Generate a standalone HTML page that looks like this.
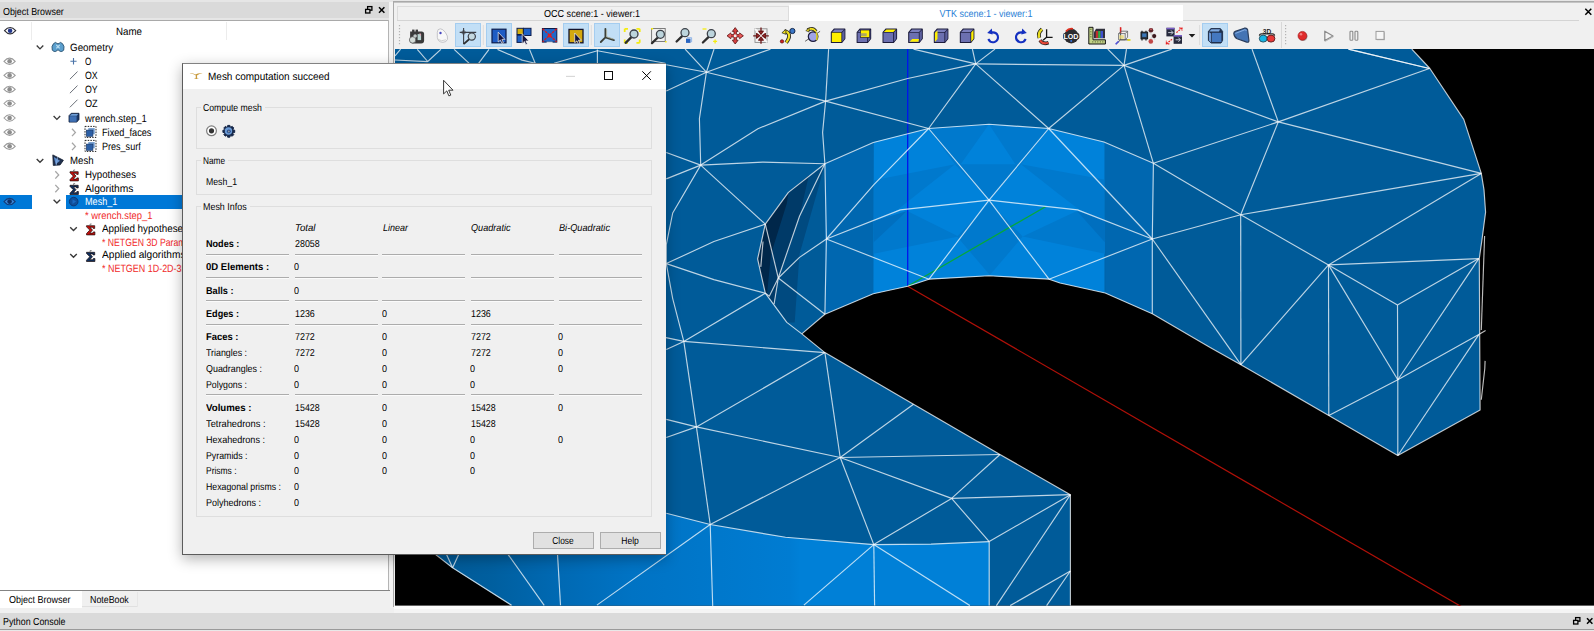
<!DOCTYPE html>
<html lang="en"><head><meta charset="utf-8"><title>Mesh computation succeed</title>
<style>
html,body{margin:0;padding:0;}
body{width:1594px;height:631px;overflow:hidden;background:#f0f0f0;position:relative;font-family:"Liberation Sans", sans-serif;}
.b{position:absolute;display:block;}
.t{position:absolute;white-space:nowrap;transform-origin:0 50%;color:#000;line-height:16px;text-rendering:geometricPrecision;}
#dlg{position:absolute;left:0;top:0;}
</style></head><body>
<div class="b" style="left:0px;top:0px;width:1594px;height:2px;background:#e6e6e6;"></div>
<div class="b" style="left:0px;top:2px;width:389px;height:16px;background:#dadada;"></div>
<div class="b" style="left:0px;top:18px;width:389px;height:2px;background:#e6e6e6;"></div>
<div class="b" style="left:393px;top:1px;width:1201px;height:1px;background:#a9a9a9;"></div>
<div class="b" style="left:393px;top:2px;width:1201px;height:1px;background:#c4c4c4;"></div>
<div class="b" style="left:0px;top:20px;width:389px;height:1px;background:#a9a9a9;"></div>
<span class="t" id="t1" style="left:2.6px;top:5px;font-size:10.2px;transform:scaleX(0.8731);">Object Browser</span>
<svg class="b" style="left:363px;top:5px" width="24" height="12" viewBox="363 5 24 12"><g fill="none" stroke="#000" stroke-width="1.3"><rect x="367.6" y="6.6" width="4.3" height="3.6"/><rect x="365.6" y="9.4" width="4.3" height="3.6" fill="#dadada"/><path d="M379 7.3l5.4 5.4M384.4 7.3l-5.4 5.4" stroke-width="1.5"/></g></svg>
<div class="b" style="left:0px;top:21px;width:389px;height:569px;background:#fff;"></div>
<div class="b" style="left:389px;top:2px;width:4px;height:606px;background:#f3f3f3;"></div>
<div class="b" style="left:388px;top:20px;width:1px;height:571px;background:#b4b4b4;"></div>
<div class="b" style="left:0px;top:590px;width:390px;height:1px;background:#838383;"></div>
<div class="b" style="left:31.3px;top:22px;width:1px;height:18px;background:#ececec;"></div>
<div class="b" style="left:225.5px;top:22px;width:1px;height:18px;background:#ececec;"></div>
<span class="t" id="t2" style="left:116px;top:24px;font-size:10.6px;transform:scaleX(0.9198);">Name</span>
<div class="b" style="left:0px;top:194.8px;width:32.2px;height:14px;background:#0078d7;"></div>
<div class="b" style="left:65.5px;top:194.8px;width:130px;height:14px;background:#0078d7;"></div>
<span class="t" id="t3" style="left:69.7px;top:40px;font-size:10.6px;transform:scaleX(0.9266);">Geometry</span>
<span class="t" id="t4" style="left:85.2px;top:54px;font-size:10.6px;transform:scaleX(0.7636);">O</span>
<span class="t" id="t5" style="left:85.2px;top:68px;font-size:10.6px;transform:scaleX(0.8294);">OX</span>
<span class="t" id="t6" style="left:85.2px;top:82px;font-size:10.6px;transform:scaleX(0.8294);">OY</span>
<span class="t" id="t7" style="left:85.2px;top:96px;font-size:10.6px;transform:scaleX(0.8628);">OZ</span>
<span class="t" id="t8" style="left:85.2px;top:111px;font-size:10.6px;transform:scaleX(0.8969);">wrench.step_1</span>
<span class="t" id="t9" style="left:101.8px;top:125px;font-size:10.6px;transform:scaleX(0.8648);">Fixed_faces</span>
<span class="t" id="t10" style="left:101.8px;top:139px;font-size:10.6px;transform:scaleX(0.8535);">Pres_surf</span>
<span class="t" id="t11" style="left:70px;top:153px;font-size:10.6px;transform:scaleX(0.9110);">Mesh</span>
<span class="t" id="t12" style="left:85.2px;top:167px;font-size:10.6px;transform:scaleX(0.9115);">Hypotheses</span>
<span class="t" id="t13" style="left:85.2px;top:181px;font-size:10.6px;transform:scaleX(0.9691);">Algorithms</span>
<span class="t" id="t14" style="left:85.2px;top:194px;font-size:10.6px;color:#fff;transform:scaleX(0.8593);">Mesh_1</span>
<span class="t" id="t15" style="left:85.2px;top:208px;font-size:10.6px;color:#f02a2a;transform:scaleX(0.8885);">* wrench.step_1</span>
<span class="t" id="t16" style="left:101.8px;top:221px;font-size:10.6px;transform:scaleX(0.9300);">Applied hypotheses</span>
<span class="t" id="t17" style="left:101.8px;top:235px;font-size:10.6px;color:#f02a2a;transform:scaleX(0.8200);">* NETGEN 3D Parameters_1</span>
<span class="t" id="t18" style="left:101.8px;top:247px;font-size:10.6px;transform:scaleX(0.9580);">Applied algorithms</span>
<span class="t" id="t19" style="left:101.8px;top:261px;font-size:10.6px;color:#f02a2a;transform:scaleX(0.8444);">* NETGEN 1D-2D-3D</span>
<svg class="b" style="left:0;top:20px" width="182" height="260" viewBox="0 20 182 260"><path d="M4.5 30.7q5.6-6.400 11.200 0q-5.600 6.400-11.200 0z" fill="#fff" stroke="#2c2c34" stroke-width="1.1"/><circle cx="10.1" cy="30.7" r="2.3" fill="#24388c"/><path d="M4.0 61.3q5.6-6.400 11.200 0q-5.600 6.400-11.200 0z" fill="#fff" stroke="#9b9b9b" stroke-width="1.1"/><circle cx="9.6" cy="61.3" r="2.3" fill="#8c8c8c"/><path d="M4.0 75.4q5.6-6.400 11.200 0q-5.600 6.400-11.200 0z" fill="#fff" stroke="#9b9b9b" stroke-width="1.1"/><circle cx="9.6" cy="75.4" r="2.3" fill="#8c8c8c"/><path d="M4.0 89.4q5.6-6.400 11.200 0q-5.600 6.400-11.200 0z" fill="#fff" stroke="#9b9b9b" stroke-width="1.1"/><circle cx="9.6" cy="89.4" r="2.3" fill="#8c8c8c"/><path d="M4.0 103.5q5.6-6.400 11.200 0q-5.600 6.400-11.200 0z" fill="#fff" stroke="#9b9b9b" stroke-width="1.1"/><circle cx="9.6" cy="103.5" r="2.3" fill="#8c8c8c"/><path d="M4.0 118.0q5.6-6.400 11.200 0q-5.600 6.400-11.200 0z" fill="#fff" stroke="#9b9b9b" stroke-width="1.1"/><circle cx="9.6" cy="118.0" r="2.3" fill="#8c8c8c"/><path d="M4.0 132.2q5.6-6.400 11.200 0q-5.600 6.400-11.200 0z" fill="#fff" stroke="#9b9b9b" stroke-width="1.1"/><circle cx="9.6" cy="132.2" r="2.3" fill="#8c8c8c"/><path d="M4.0 146.3q5.6-6.400 11.200 0q-5.600 6.400-11.200 0z" fill="#fff" stroke="#9b9b9b" stroke-width="1.1"/><circle cx="9.6" cy="146.3" r="2.3" fill="#8c8c8c"/><path d="M4.0 201.6q5.6-6.400 11.200 0q-5.600 6.400-11.200 0z" fill="#3b86d6" stroke="#143c78" stroke-width="1.1"/><circle cx="9.6" cy="201.6" r="2.3" fill="#0d2f66"/><path d="M36.7 45.6l3.300 3.300 3.300-3.300" fill="none" stroke="#3a3a3a" stroke-width="1.35"/><path d="M53.6 116.1l3.300 3.300 3.300-3.300" fill="none" stroke="#3a3a3a" stroke-width="1.35"/><path d="M36.7 158.9l3.300 3.300 3.300-3.300" fill="none" stroke="#3a3a3a" stroke-width="1.35"/><path d="M53.6 199.7l3.300 3.300 3.300-3.300" fill="none" stroke="#3a3a3a" stroke-width="1.35"/><path d="M70.2 227.3l3.300 3.300 3.300-3.300" fill="none" stroke="#3a3a3a" stroke-width="1.35"/><path d="M70.2 253.9l3.300 3.300 3.300-3.300" fill="none" stroke="#3a3a3a" stroke-width="1.35"/><path d="M72.0 128.7l3.400 3.700-3.400 3.700" fill="none" stroke="#a6a6a6" stroke-width="1.3"/><path d="M72.0 142.7l3.400 3.700-3.400 3.700" fill="none" stroke="#a6a6a6" stroke-width="1.3"/><path d="M55.3 171.2l3.400 3.700-3.400 3.700" fill="none" stroke="#a6a6a6" stroke-width="1.3"/><path d="M55.3 184.9l3.400 3.700-3.400 3.700" fill="none" stroke="#a6a6a6" stroke-width="1.3"/><path d="M52.0 46.6q1.200-3.800 3.600-4.200 1.500 1.400 2.400 1.400t2.400-1.400q2.400.4 3.600 4.200l-.3 3.600q-1.800 1.900-3.500 1.200l-2.200-1.600-2.200 1.600q-1.700.7-3.500-1.200z" fill="#5b9fce" stroke="#27506e" stroke-width=".9"/><path d="M56.3 45.0l3.400 3.400m0-3.400l-3.400 3.400" stroke="#b8dcf0" stroke-width="1.2"/><path d="M70.4 61.3h6.200M73.5 58.1v6.400" stroke="#4b74a8" stroke-width="1.1" fill="none"/><path d="M69.9 79.2l7.600-7.600" stroke="#6a6f78" stroke-width="1" fill="none"/><path d="M69.9 93.2l7.600-7.600" stroke="#6a6f78" stroke-width="1" fill="none"/><path d="M69.9 107.3l7.600-7.600" stroke="#6a6f78" stroke-width="1" fill="none"/><path d="M69.0 115.7l2.200-2.400h7.800v6.200l-2.200 2.600h-7.800z" fill="#1b3866" stroke="#10203c" stroke-width=".8" stroke-linejoin="round"/><rect x="69.6" y="116.2" width="7" height="5.600" fill="#3f70b4"/><path d="M69.9 115.8l1.700-1.800h6.600l-1.500 1.800z" fill="#6f9fd8"/><rect x="85.0" y="126.4" width="11" height="11" fill="#fff" stroke="#222" stroke-width="1" stroke-dasharray="1.5 1.2"/><rect x="88.3" y="128.1" width="6.400" height="6.200" fill="#6f9bd0"/><rect x="86.3" y="130.1" width="6.600" height="6.200" fill="#2c5fa6" stroke="#1a3560" stroke-width=".6"/><rect x="85.0" y="140.4" width="11" height="11" fill="#fff" stroke="#222" stroke-width="1" stroke-dasharray="1.5 1.2"/><rect x="88.3" y="142.1" width="6.400" height="6.200" fill="#6f9bd0"/><rect x="86.3" y="144.1" width="6.600" height="6.200" fill="#2c5fa6" stroke="#1a3560" stroke-width=".6"/><path d="M52.8 154.9l10.600 5.400-3.300 4.600-6.800.5z" fill="#20304e" stroke="#101a2c" stroke-width=".8" stroke-linejoin="round"/><path d="M53.8 157.1l6.200 3.600-4.400 3.600z" fill="#5f8fd0"/><path d="M57.5 157.3l-1.400 8.200" stroke="#8fb4e4" stroke-width=".8"/><g transform="translate(74.1 175.3)"><path d="M-4.100-3.600h8.200v2.700h-1.500l-.4-1.100h-2.800l2.500 2.800-2.700 3h3.100l.5-1.200h1.500v3h-8.400v-1.300l3.300-3.500-3.300-3.300z" fill="#c4100c" stroke="#1a0c0c" stroke-width=".7" stroke-linejoin="round"/><path d="M-.5-3.600v-1.700h1.500" stroke="#666" stroke-width=".8" fill="none"/></g><g transform="translate(74.1 188.9)"><path d="M-4.100-3.600h8.200v2.700h-1.500l-.4-1.100h-2.800l2.500 2.800-2.700 3h3.100l.5-1.200h1.500v3h-8.400v-1.300l3.300-3.500-3.300-3.300z" fill="#10305e" stroke="#1a0c0c" stroke-width=".7" stroke-linejoin="round"/><path d="M-.5-3.600v-1.700h1.500" stroke="#666" stroke-width=".8" fill="none"/></g><circle cx="73.7" cy="201.6" r="4.300" fill="#0f4f9a" stroke="#0a3a7a" stroke-width="1"/><path d="M72.5 199.3l3.600 2.200-3.600 2.400z" fill="#1a6ac2"/><g transform="translate(90.6 229.3)"><path d="M-4.100-3.600h8.200v2.700h-1.500l-.4-1.100h-2.800l2.500 2.800-2.700 3h3.100l.5-1.200h1.500v3h-8.400v-1.300l3.300-3.500-3.300-3.300z" fill="#c4100c" stroke="#1a0c0c" stroke-width=".7" stroke-linejoin="round"/><path d="M-.5-3.600v-1.700h1.500" stroke="#666" stroke-width=".8" fill="none"/></g><g transform="translate(90.6 255.9)"><path d="M-4.100-3.600h8.200v2.700h-1.500l-.4-1.100h-2.800l2.500 2.800-2.700 3h3.100l.5-1.200h1.500v3h-8.400v-1.300l3.300-3.500-3.300-3.300z" fill="#10305e" stroke="#1a0c0c" stroke-width=".7" stroke-linejoin="round"/><path d="M-.5-3.600v-1.700h1.500" stroke="#666" stroke-width=".8" fill="none"/></g></svg>
<div class="b" style="left:0px;top:591px;width:390px;height:17px;background:#f0f0f0;"></div>
<div class="b" style="left:0px;top:591px;width:81.7px;height:17px;background:#fff;"></div>
<div class="b" style="left:82px;top:606px;width:55px;height:1px;background:#e0e0e0;"></div>
<div class="b" style="left:136.5px;top:592px;width:1px;height:15px;background:#e6e6e6;"></div>
<span class="t" id="t20" style="left:8.6px;top:593px;font-size:10.2px;transform:scaleX(0.8831);">Object Browser</span>
<span class="t" id="t21" style="left:89.8px;top:593px;font-size:10.2px;transform:scaleX(0.8670);">NoteBook</span>
<div class="b" style="left:0px;top:608px;width:1594px;height:5px;background:#f0f0f0;"></div>
<div class="b" style="left:0px;top:612.8px;width:1594px;height:16px;background:#dadada;"></div>
<div class="b" style="left:0px;top:628.6px;width:1594px;height:1.4px;background:#9a9a9a;"></div>
<div class="b" style="left:0px;top:630px;width:1594px;height:1px;background:#e8e8e8;"></div>
<span class="t" id="t22" style="left:2.6px;top:615px;font-size:10.2px;transform:scaleX(0.8688);">Python Console</span>
<svg class="b" style="left:1568.700px;top:615.6px" width="26" height="12" viewBox="1568 615 26 12"><g fill="none" stroke="#000" stroke-width="1.3"><rect x="1574.6" y="616.6" width="4.3" height="3.6"/><rect x="1572.6" y="619.4" width="4.3" height="3.6" fill="#dadada"/><path d="M1586 617.3l5.4 5.4M1591.4 617.3l-5.4 5.4" stroke-width="1.5"/></g></svg>
<div class="b" style="left:393px;top:2px;width:1px;height:605px;background:#a9a9a9;"></div>
<div class="b" style="left:397px;top:6px;width:391.5px;height:14.5px;background:#f0f0f0;border:1px solid #dcdcdc;box-sizing:border-box;"></div>
<div class="b" style="left:397px;top:20.3px;width:1182px;height:1px;background:#d4d4d4;"></div>
<div class="b" style="left:788.5px;top:4.5px;width:394.5px;height:16.5px;background:#fff;"></div>
<span class="t" id="t23" style="left:591.5px;top:7px;font-size:10.2px;transform:translateX(-50%) scaleX(0.8877);transform-origin:50% 50%;">OCC scene:1 - viewer:1</span>
<span class="t" id="t24" style="left:986.3px;top:7px;font-size:10.2px;color:#2b7fd6;transform:translateX(-50%) scaleX(0.8831);transform-origin:50% 50%;">VTK scene:1 - viewer:1</span>
<svg class="b" style="left:1580px;top:6px" width="14" height="12" viewBox="1580 6 14 12"><path d="M1585.3 8.7l6 6M1591.3 8.7l-6 6" stroke="#000" stroke-width="1.5" fill="none"/></svg>
<svg class="b" style="left:394px;top:21px" width="1200" height="28" viewBox="394 21 1200 28">
<rect x="455.5" y="23.500" width="25" height="23" fill="#c2dff6" stroke="#a4cdf0" stroke-width="1"/>
<rect x="486.5" y="23.500" width="25" height="23" fill="#c2dff6" stroke="#a4cdf0" stroke-width="1"/>
<rect x="563.5" y="23.500" width="25" height="23" fill="#c2dff6" stroke="#a4cdf0" stroke-width="1"/>
<rect x="594.5" y="23.500" width="25" height="23" fill="#c2dff6" stroke="#a4cdf0" stroke-width="1"/>
<rect x="1202.5" y="23.500" width="25" height="23" fill="#c2dff6" stroke="#a4cdf0" stroke-width="1"/>
<path d="M483.3 25v20" stroke="#dcdcdc" stroke-width="1"/>
<path d="M591.3 25v20" stroke="#dcdcdc" stroke-width="1"/>
<path d="M1199.6 25v20" stroke="#dcdcdc" stroke-width="1"/>
<path d="M399.5 25v21" stroke="#b4b4b4" stroke-width="1.200" stroke-dasharray="1.200 1.800"/>
<path d="M1285.6 25v21" stroke="#b4b4b4" stroke-width="1.200" stroke-dasharray="1.200 1.800"/>
<path d="M1281.500 22v26" stroke="#d8d8d8" stroke-width="1"/>
<g transform="translate(416.6 35.8)"><g transform="translate(0 .8)"><path d="M-6.500-5h11.500q2.500 0 2.500 2.500v6.500q0 3-3 3h-8q-3 0-3-3z" fill="#3a3a3a"/><rect x="-4.500" y="-7" width="2.400" height="2.400" fill="#3a3a3a"/><rect x="-1" y="-7" width="2.400" height="2.400" fill="#3a3a3a"/><path d="M1-2.500h3.500v6h-3.500z" fill="#b8d4d0"/><path d="M2.500-3l1.800 0 0 3z" fill="#e0a0b0"/><circle cx="-4" cy="3.300" r="3.200" fill="#d4dcd8" stroke="#555" stroke-width=".8"/><circle cx="-1.500" cy="-.6" r="1.800" fill="#c0c8c8"/></g></g>
<g transform="translate(441.8 35.8)"><path d="M-4.500-3.500q0-3.500 3-3.500 2.500 0 5 3.500 3 4 2.200 7-1 3-4.500 3-5 0-5.700-5z" fill="#f8f8f8" stroke="#c4c4c8" stroke-width="1"/><circle cx="-1.300" cy="-2.800" r="1.200" fill="#4848c0"/><path d="M-3.800 3.500q3 2.500 8 .5" stroke="#d0d0d0" stroke-width="1" fill="none"/></g>
<g transform="translate(468.2 35.8)"><path d="M-8.500-3.400h16.500M-4.600-7.800v16" stroke="#3c4048" stroke-width="1.100"/><path d="M-6-4.800h2.800v2.800h-2.800z" fill="none" stroke="#3c4048" stroke-width=".7"/><path d="M1.500 3l-5.500 4.800" stroke="#2e2e2e" stroke-width="1.800" stroke-linecap="round"/><circle cx="3.600" cy=".8" r="3.600" fill="#c4d8e0" stroke="#3c4048" stroke-width="1.200"/></g>
<g transform="translate(499.0 35.8)"><rect x="-7" y="-6.600" width="14" height="13.600" fill="#1e5cc4" stroke="#0c1c4c" stroke-width="1.200"/><path d="M-.8-3.600v9.800l2.200-2 1.500 3.300 1.500-.7-1.500-3.200h3z" fill="#14143c" stroke="#f4f4f4" stroke-width=".7" stroke-linejoin="round"/></g>
<g transform="translate(524.0 35.8)"><rect x="-.5" y="-7.500" width="7.500" height="7.200" fill="#1e62c8" stroke="#0c1c4c" stroke-width="1"/><rect x="-7" y="-7.500" width="6.300" height="6.200" fill="#d4b010" stroke="#0c1c4c" stroke-width="1"/><rect x="-7" y="-.6" width="6.500" height="7.200" fill="#1e62c8" stroke="#0c1c4c" stroke-width="1"/><g transform="translate(-1 1.500)"><path d="M-.8-3.600v9.800l2.200-2 1.500 3.300 1.500-.7-1.500-3.200h3z" fill="#14143c" stroke="#f4f4f4" stroke-width=".7" stroke-linejoin="round"/></g></g>
<g transform="translate(549.6 35.8)"><rect x="-7.200" y="-7.300" width="14.400" height="13.600" fill="#2068c8" stroke="#0c1c4c" stroke-width="1"/><path d="M-7-7l14 13M7-7l-14 13" stroke="#e01818" stroke-width="1.300" stroke-dasharray="2.500 1"/><circle r="1.800" fill="#e02020"/><path d="M-3 6.500h6" stroke="#e8e8e8" stroke-width="1.200"/></g>
<g transform="translate(576.0 35.8)"><rect x="-7" y="-6.400" width="14" height="13.400" fill="#d4a910" stroke="#14142c" stroke-width="1.300"/><g transform="translate(-.5 .8)"><path d="M-.8-3.600v9.800l2.200-2 1.500 3.300 1.500-.7-1.500-3.200h3z" fill="#14143c" stroke="#f4f4f4" stroke-width=".7" stroke-linejoin="round"/></g></g>
<g transform="translate(607.0 35.8)"><path d="M-1.600-7v8.600l-4.600 4.600M-1.600 1.600l8.500 2.800" stroke="#3c4038" stroke-width="1.800" fill="none" stroke-linecap="round"/><path d="M-.4-6v7l7 2.300" stroke="#a8ac98" stroke-width=".9" fill="none"/></g>
<g transform="translate(632.2 35.8)"><path d="M-7.500-7h3.300M-7.500-7v3.300M7.500-7h-3.300M7.500-7v3.300M-7.500 7h3.300M-7.500 7v-3.300M7.500 7h-3.300M7.500 7v-3.300" stroke="#f4ec10" stroke-width="1.800" fill="none"/><path d="M-0.8 1.4l-5.800 5.600" stroke="#2e2e2e" stroke-width="2.300" stroke-linecap="round"/><circle cx="1.8" cy="-1.8" r="4" fill="#bcd4dc" stroke="#3c4048" stroke-width="1.3"/></g>
<g transform="translate(658.6 35.8)"><rect x="-7" y="-7.300" width="13.600" height="13" fill="none" stroke="#707070" stroke-width=".9"/><path d="M-7.500-7h2M6.500 6h1.500" stroke="#f4ec10" stroke-width="1.500"/><path d="M-0.8 1.7l-5.800 5.600" stroke="#2e2e2e" stroke-width="2.300" stroke-linecap="round"/><circle cx="1.8" cy="-1.5" r="4" fill="#bcd4dc" stroke="#3c4048" stroke-width="1.3"/></g>
<g transform="translate(684.2 35.8)"><path d="M-1.8 0.1l-5.800 5.600" stroke="#2e2e2e" stroke-width="2.300" stroke-linecap="round"/><circle cx="0.8" cy="-3.1" r="4" fill="#bcd4dc" stroke="#3c4048" stroke-width="1.3"/><rect x="1.800" y="2.800" width="4.500" height="4.300" fill="#2864c0"/><path d="M2.800 1.900h4.600v4.500" stroke="#88b0e8" stroke-width=".9" fill="none"/></g>
<g transform="translate(709.8 35.8)"><path d="M-7.300-6.800h4" stroke="#f4ec10" stroke-width="1.300"/><path d="M3.300 5.600h4M5.300 3.600v4" stroke="#f4ec10" stroke-width="1.300"/><path d="M-1.1 1.1l-5.800 5.600" stroke="#2e2e2e" stroke-width="2.300" stroke-linecap="round"/><circle cx="1.5" cy="-2.1" r="4" fill="#bcd4dc" stroke="#3c4048" stroke-width="1.3"/></g>
<g transform="translate(735.2 35.8)"><path d="M0-8.200l2.900 3.800h-1.700v3.200h3.200v-1.700l3.800 2.900-3.800 2.900v-1.700h-3.200v3.200h1.700l-2.900 3.800-2.900-3.800h1.700v-3.200h-3.200v1.700l-3.800-2.900 3.800-2.900v1.700h3.200v-3.200h-1.700z" fill="#d84040" stroke="#5c1414" stroke-width=".8" stroke-linejoin="round"/><rect x="-1.300" y="-1.300" width="2.600" height="2.600" fill="#f0f0f0"/><path d="M-4.200-2.200l-2.800 2.200 2.800 2.200zM4.200-2.200l2.800 2.200-2.800 2.200z" fill="#e86060"/></g>
<g transform="translate(761.0 35.8)"><rect x="-6" y="-7" width="12" height="13.600" fill="#f4f4f4" stroke="#8c8c8c" stroke-width=".9"/><path d="M-6-7l12 13.600" stroke="#f8f8f8" stroke-width="1.800"/><path d="M0-8.200v3.800l-2.200-.2 2.200 3 2.200-3-2.200.2M0 8v-3.800l-2.200.2 2.200-3 2.200 3-2.200-.2M-7.800 0h3.600l-.2-2.200 3 2.200-3 2.200.2-2.200M7.800 0h-3.600l.2-2.200-3 2.200 3 2.200-.2-2.200" fill="#d43c3c" stroke="#6c1818" stroke-width="1.300" stroke-linejoin="round"/></g>
<g transform="translate(787.4 35.8)"><path d="M-3-4.500q4 .2 4.600 3.500t-2.800 7.800" stroke="#1c1c1c" stroke-width="3.800" fill="none"/><path d="M-3-4.500q4 .2 4.600 3.500t-2.800 7.800" stroke="#f0e020" stroke-width="2.200" fill="none"/><path d="M-5.500-3l4-3.500v5z" fill="#f0e020" stroke="#1c1c1c" stroke-width=".7"/><circle cx="5" cy="-4.800" r="2.600" fill="#3c78c8" stroke="#14284c" stroke-width="1"/><circle cx="-5.400" cy="5.600" r="1.700" fill="#d02020" stroke="#501010" stroke-width=".7"/></g>
<g transform="translate(812.6 35.8)"><path d="M-7.500 5.500l15-10" stroke="#505050" stroke-width=".9"/><circle cx=".5" cy=".8" r="4.800" fill="#a0a4e8" stroke="#1c1c3c" stroke-width="1.200"/><path d="M-5-5.800q5-3 8.500 1.500" stroke="#1c1c1c" stroke-width="3.400" fill="none"/><path d="M-5-5.800q5-3 8.500 1.500" stroke="#f0e020" stroke-width="1.900" fill="none"/><path d="M-6.800-5.200l3.500-2.600-.3 4z" fill="#f0e020" stroke="#1c1c1c" stroke-width=".6"/><path d="M3.500-3.500q1.800 3.500.5 8" stroke="#d8cc20" stroke-width="1.500" fill="none"/></g>
<g transform="translate(838.6 35.8)"><path d="M-7.200-3.400l3-3.400h10.400v9.600l-3 3.800h-10.400z" fill="#1c1c3c" stroke="#1c1c3c" stroke-width="1.2" stroke-linejoin="round"/><rect x="-6.800" y="-3.100" width="9.600" height="9.300" fill="#fff000"/><path d="M-6.400-3.900l2.500-2.500h9.400l-2.500 2.500z" fill="#7a7ebc"/><path d="M3.600-3.400l2.300-2.500v8.800l-2.300 3z" fill="#5c609e"/></g>
<g transform="translate(864.4 35.8)"><path d="M-7.200-3.400l3-3.400h10.400v9.600l-3 3.800h-10.400z" fill="#1c1c3c" stroke="#1c1c3c" stroke-width="1.2" stroke-linejoin="round"/><rect x="-6.800" y="-3.100" width="9.600" height="9.300" fill="#6c70b0"/><path d="M-6.400-3.900l2.500-2.500h9.400l-2.500 2.500z" fill="#7a7ebc"/><path d="M3.600-3.400l2.300-2.500v8.800l-2.300 3z" fill="#5c609e"/><rect x="-4" y="-5.800" width="9.300" height="7.600" fill="#fff000" stroke="#1c1c3c" stroke-width=".7"/><rect x="-6.500" y="-2.600" width="8.800" height="3" fill="#6c70b0" opacity=".55"/></g>
<g transform="translate(890.3 35.8)"><path d="M-7.200-3.400l3-3.400h10.400v9.600l-3 3.800h-10.400z" fill="#1c1c3c" stroke="#1c1c3c" stroke-width="1.2" stroke-linejoin="round"/><rect x="-6.800" y="-3.100" width="9.600" height="9.300" fill="#6c70b0"/><path d="M-6.400-3.900l2.500-2.500h9.400l-2.500 2.500z" fill="#fff000"/><path d="M3.600-3.400l2.300-2.500v8.800l-2.300 3z" fill="#5c609e"/></g>
<g transform="translate(916.0 35.8)"><path d="M-7.200-3.400l3-3.400h10.400v9.600l-3 3.800h-10.400z" fill="#1c1c3c" stroke="#1c1c3c" stroke-width="1.2" stroke-linejoin="round"/><rect x="-6.800" y="-3.100" width="9.600" height="9.300" fill="#6c70b0"/><path d="M-6.400-3.900l2.500-2.500h9.400l-2.500 2.500z" fill="#7a7ebc"/><path d="M3.600-3.400l2.300-2.500v8.800l-2.300 3z" fill="#5c609e"/><path d="M-6.400 6l2.600-2.800h6.800l-.6 2.800z" fill="#fff000"/></g>
<g transform="translate(941.6 35.8)"><path d="M-7.200-3.400l3-3.400h10.400v9.600l-3 3.800h-10.400z" fill="#1c1c3c" stroke="#1c1c3c" stroke-width="1.2" stroke-linejoin="round"/><rect x="-6.800" y="-3.100" width="9.600" height="9.300" fill="#6c70b0"/><path d="M-6.400-3.900l2.500-2.500h9.400l-2.500 2.500z" fill="#7a7ebc"/><path d="M3.600-3.400l2.300-2.500v8.800l-2.300 3z" fill="#5c609e"/><path d="M-6.700-3v9l2.600-2.800v-8.600z" fill="#fff000"/></g>
<g transform="translate(967.6 35.8)"><path d="M-7.200-3.400l3-3.400h10.400v9.600l-3 3.800h-10.400z" fill="#1c1c3c" stroke="#1c1c3c" stroke-width="1.2" stroke-linejoin="round"/><rect x="-6.800" y="-3.100" width="9.600" height="9.300" fill="#6c70b0"/><path d="M-6.400-3.900l2.500-2.500h9.400l-2.500 2.500z" fill="#7a7ebc"/><path d="M3.600-3.400l2.300-2.500v8.800l-2.300 3z" fill="#fff000"/></g>
<g transform="translate(994.0 35.8)"><path d="M-3.200-3.200q5.500-1 7 3.200 1 4.600-3.200 6.200-4.200 1.200-6.300-3" stroke="#1430c0" stroke-width="2.100" fill="none"/><path d="M-6.800-2.800l4.600-4.400.8 6z" fill="#1430c0"/></g>
<g transform="translate(1020.0 35.8)"><path d="M3.200-3.200q-5.500-1-7 3.200-1 4.600 3.200 6.200 4.200 1.200 6.300-3" stroke="#1430c0" stroke-width="2.100" fill="none"/><path d="M6.800-2.800l-4.600-4.400-.8 6z" fill="#1430c0"/></g>
<g transform="translate(1045.0 35.8)"><path d="M1.600-6.500v8h6M1.600 1.500l-3.600 3" stroke="#141414" stroke-width="1.300" fill="none"/><path d="M-3-6.500q-4.500 3.500-2.600 8.500" stroke="#1c1c1c" stroke-width="3.800" fill="none"/><path d="M-3-6.500q-4.500 3.500-2.600 8.500" stroke="#e8dc20" stroke-width="2.300" fill="none"/><path d="M-5 4.500q3 4.500 8.500 2.300" stroke="#1c1c1c" stroke-width="3.600" fill="none"/><path d="M-5 4.500q3 4.500 8.500 2.300" stroke="#e84838" stroke-width="2.100" fill="none"/></g>
<g transform="translate(1071.0 35.8)"><circle cx=".3" cy=".3" r="7.300" fill="#2c2c30"/><path d="M-5-4.500q3-3.500 7-2.500" stroke="#e03020" stroke-width="1.800" fill="none"/><rect x="-8" y="-2.800" width="16.400" height="6.400" rx="2" fill="#2c2c30"/><text x="0" y="3" font-family="Liberation Sans,sans-serif" font-size="7.600" font-weight="bold" fill="#fff" text-anchor="middle" textLength="15" lengthAdjust="spacingAndGlyphs">LOD</text><circle cx=".2" cy="5.300" r="1" fill="#3878e0"/></g>
<g transform="translate(1096.8 35.8)"><path d="M-8-8.500h4.200v12.500h12.400v4.200h-16.600z" fill="#c4d488" stroke="#141414" stroke-width="1"/><path d="M-2.800-3.500l2-3.500h9v9.500h-11z" fill="#30303c"/><rect x="-1" y="-4.800" width="2.400" height="7" fill="#c03030"/><rect x="1.400" y="-4.800" width="2.400" height="7" fill="#30b040"/><rect x="3.800" y="-4.800" width="2.400" height="7" fill="#4050d0"/><path d="M-6.800-6.500h1.600M-6.800-4h1.600M-6.800-1.500h1.600M-6.800 1h1.600M-4 6.800v-1.600M-1.500 6.800v-1.600M1 6.800v-1.600M3.500 6.800v-1.600M6 6.800v-1.600" stroke="#3c4420" stroke-width=".6"/></g>
<g transform="translate(1122.8 35.8)"><path d="M-2.200-8v12l-4.600 4.400M-2.200 4h9.500" stroke="#484848" stroke-width="1" fill="none"/><path d="M-2.200-8.600v5.500" stroke="#e02020" stroke-width="1.500"/><path d="M-7.200 8.400l3-2.800" stroke="#5050d8" stroke-width="1.500"/><path d="M4.500 4.200h3.200" stroke="#e8e020" stroke-width="1.700"/><path d="M-4.200-2.200l2.400-2.400h6.600v6l-2.400 2.600h-6.600z M-4.200-2.200h6.600v6.200M2.400-2.200l2.400-2.400" fill="none" stroke="#606060" stroke-width=".8"/><rect x="-3.600" y="-.6" width="4.600" height="3.600" fill="#e8d870" opacity=".8"/></g>
<g transform="translate(1148.0 35.8)"><rect x="-7" y="-3.600" width="6.600" height="6.600" fill="#283848" stroke="#14181c" stroke-width="1"/><rect x="-5.800" y="-2.300" width="4.200" height="3.400" fill="#3c78b8"/><path d="M-6-5v1.500M-2-5v1.500M-6 3v1.800M-2 3v1.800" stroke="#14181c" stroke-width="1.200"/><path d="M.5-5.500l6.500 9.500M.8 5.800l5.800-8.500" stroke="#d8d8d8" stroke-width="1.600"/><circle cx="3" cy="-5.600" r="2.300" fill="#5c2428"/><circle cx="6.200" cy=".3" r="2.100" fill="#3c181c"/><circle cx="2.800" cy="5.600" r="2.300" fill="#c04848"/><path d="M1.800-6.600h2.400" stroke="#e06068" stroke-width="1"/></g>
<g transform="translate(1174.4 35.8)"><rect x="-8" y="-8" width="8.200" height="8.600" fill="#262a3c"/><rect x="-8" y="-8" width="8.200" height="1.600" fill="#7c60c8"/><rect x="-.8" y="-.8" width="8.400" height="8.800" fill="#262a3c"/><rect x="-.8" y="-.8" width="8.400" height="1.600" fill="#7c60c8"/><path d="M-6.200-3.200h4.600M-3.400-5.400l2 2.200-2 2M1.200 4h4.600M4 1.800l2 2.200-2 2" stroke="#d8dce8" stroke-width=".9" fill="none"/><path d="M2-3.200l5.600-4.600M4.600-7.800h3v3M-2.400 3.400l-5.600 4.600M-5 8h-3v-3" stroke="#e82020" stroke-width="1.200" fill="none" stroke-dasharray="1.800 .9"/></g>
<g transform="translate(1192.0 35.8)"><path d="M-3.300-1.800h6.600l-3.300 3.600z" fill="#1c1c1c"/></g>
<g transform="translate(1215.4 35.8)"><path d="M-7-4.600l2.600-2.600h9.400l2.200 2.800v9l-1.600 2.600h-9.800l-2.800-2.400z" fill="#20304c" stroke="#20304c" stroke-width="1" stroke-linejoin="round"/><path d="M-6.200-4.300l2.200-2.200h8.600l-1 2.200z" fill="#7ca8e0"/><path d="M-6.400-3.600v8.600l2.200 1.800v-9z" fill="#6c98d4"/><rect x="-3.400" y="-3" width="9.400" height="9.200" fill="#4478c0"/></g>
<g transform="translate(1241.4 35.8)"><path d="M-7.600-2.200q0-1.600 1.500-2.200l9-3.200q2.600-.6 3.300 1.600l1.300 10.500q.2 2.500-2.200 1.800l-9.600-3.400q-2.600-1.200-3.300-5.100z" fill="#4474b4" stroke="#283c5c" stroke-width="1.200" stroke-linejoin="round"/><path d="M-6-2.400l9.400-3.600 1.800.6" stroke="#88b0e4" stroke-width="1" fill="none"/></g>
<g transform="translate(1267.0 35.8)"><path d="M-7.500 0q0-2 2-2h11q2 0 2 2" stroke="#2c2c2c" stroke-width="1.300" fill="none"/><ellipse cx="-3.800" cy="2.800" rx="3.900" ry="3.500" fill="#18b4e4" stroke="#1c4c5c" stroke-width=".9"/><ellipse cx="4" cy="2.800" rx="3.900" ry="3.500" fill="#e83838" stroke="#5c1c1c" stroke-width=".9"/><text x="0" y="-1.800" font-family="Liberation Sans,sans-serif" font-size="7" font-weight="bold" fill="#1c1c1c" text-anchor="middle" textLength="8.400" lengthAdjust="spacingAndGlyphs">3D</text></g>
<g transform="translate(1302.4 35.8)"><circle cx=".6" cy=".8" r="4.500" fill="#a4a4a4"/><circle cx="0" cy="0" r="4.400" fill="#e02c2c" stroke="#a01818" stroke-width=".6"/><circle cx="-1.400" cy="-1.500" r="1.300" fill="#f08080"/></g>
<g transform="translate(1328.4 35.8)"><path d="M-3.600-4.600l8.200 4.800-8.200 4.600z" fill="#f4f4f4" stroke="#8c8c8c" stroke-width="1.300" stroke-linejoin="round"/><path d="M-3.200 5.600l8.400-4.800" stroke="#bcbcbc" stroke-width="1"/></g>
<g transform="translate(1354.0 35.8)"><rect x="-4" y="-4.600" width="2.800" height="9" rx=".8" fill="#f0f0f0" stroke="#8c8c8c" stroke-width="1.100"/><rect x="1" y="-4.600" width="2.800" height="9" rx=".8" fill="#f0f0f0" stroke="#8c8c8c" stroke-width="1.100"/></g>
<g transform="translate(1380.0 35.8)"><rect x="-3.200" y="-3.600" width="8" height="8" fill="#b4b4b4"/><rect x="-4" y="-4.400" width="8" height="8" fill="#f6f6f6" stroke="#9c9c9c" stroke-width="1"/></g>
</svg>
<svg class="b" width="1199" height="556.6" viewBox="395 49.4 1199 556.6" style="left:395px;top:49.4px">
<defs><linearGradient id="cyl" gradientUnits="userSpaceOnUse" x1="450" y1="0" x2="800" y2="0"><stop offset="0" stop-color="#005b99"/><stop offset=".12" stop-color="#005f9f"/><stop offset=".31" stop-color="#0069b3"/><stop offset=".52" stop-color="#0073c4"/><stop offset=".97" stop-color="#007cd2"/><stop offset="1" stop-color="#0080d7"/></linearGradient></defs>
<rect x="394" y="49" width="1200" height="557" fill="#000"/>
<polygon fill="#005b99" points="394,49.5 1411.8,49.5 1429.9,68.9 1463.8,119.8 1481.3,173.8 1484,190 1485.6,212.6 1482,240 1479.3,259 1480.1,410.3 1397.8,455.9 1328.8,415.8 1240.9,365.1 1210.6,348.1 1152.3,314.2 1105.2,293.4 1060,283.4 1049,279.6 989,276.2 929,279.6 907.7,286.6 873.3,294.1 824.9,314.7 801.8,334.3 824.9,353 913.5,404.7 1000,454.9 1070.4,495.1 1070.4,606 511.6,606 451.3,567.6 435.3,554 394,520"/>
<polygon fill="#0067b0" points="824.9,164.2 873.3,142.9 873.3,294.1 824.9,314.7"/>
<polygon fill="#0067b0" points="1104.6,142.9 1153.4,163.7 1152.3,314.2 1105.2,293.4"/>
<polygon fill="#0082da" points="873.6,144 873.9,142.4 928.6,128.9 989,124.7 1048.7,128.9 1104,142.4 1104.6,144 1104.6,293.2 1060,283.4 1049,279.6 989,276.2 929,279.6 907.7,286.6 873.3,294.1"/>
<polygon fill="#0079cd" points="873.9,180.7 955,164.7 919.2,193 873.9,228.8"/>
<polygon fill="#0079cd" points="1104,179.8 1021,164.7 1056.8,193 1104,228.8"/>
<polygon fill="#0079cd" points="928.6,128.9 989,124.7 960.7,164.7 955,164.7"/>
<polygon fill="#0079cd" points="1048.7,128.9 989,124.7 1015.4,164.7 1021,164.7"/>
<polygon fill="#0079cd" points="955,164.7 1021,164.7 989,199.6"/>
<polygon fill="#0079cd" points="957,237 989.9,202.8 1022.7,237 989.9,275.5"/>
<polygon fill="#0079cd" points="907.1,211.3 958.5,237 873.7,254.1 873.7,239.9"/>
<polygon fill="#0079cd" points="1076.9,211.3 1022.7,237 1104.9,254.1 1104.9,239.9"/>
<polygon fill="#006fbf" points="1076.9,211.3 1104.9,219.9 1104.9,242.7"/>
<polygon fill="#006fbf" points="907.1,211.3 873.7,221.3 873.7,242.7"/>
<polygon fill="#004a80" points="765.3,224.5 788.4,192.8 824.9,164.2 818.5,188 799.5,254.6 794.7,322.8 786.8,322.8 774.1,304.4 765.3,293.6 761.5,276.8 757.6,259.4"/>
<polygon fill="#003a68" points="788.4,192.8 809,175.4 799.5,216.6 786.8,254.6 778.3,278.4 774.1,304.4 765.3,293.6 765.3,224.5"/>
<polygon fill="#00274a" points="765.3,224.5 788.4,192.8 786.8,203.9 771,254.6 767.2,292.7 765.3,293.6 761.5,276.8 757.6,259.4"/>
<polygon fill="url(#cyl)" points="435.3,554 451.3,567.6 511.6,606 989.2,606 989.2,542 931,544.5 873.8,545 785.5,537.7 710.2,524.9 666.3,513.7 560,500"/>
<g fill="none" stroke-width="1.3">
<line x1="907.7" y1="49" x2="907.7" y2="286.6" stroke="#0014ee"/>
<line x1="907.7" y1="286.6" x2="1045.5" y2="207.1" stroke="#06a83a" stroke-width="1.25"/>
<line x1="907.7" y1="286.6" x2="1461.3" y2="607" stroke="#b01008" stroke-width="1.2"/>
</g>
<g fill="none" stroke="#fff" stroke-opacity=".74" stroke-width="1.15" stroke-linejoin="round">
<polyline points="666.3,65.1 706.4,72.6"/>
<polyline points="685.1,49.5 706.4,72.6"/>
<polyline points="714,49.5 706.4,72.6"/>
<polyline points="706.4,72.6 770.4,49.5"/>
<polyline points="706.4,72.6 825.6,101.5"/>
<polyline points="706.4,72.6 699.4,119 700.7,165.5"/>
<polyline points="666.3,91.4 706.4,72.6"/>
<polyline points="828.6,49.5 825.6,101.5"/>
<polyline points="825.6,101.5 822.6,132.8 824.9,164.2"/>
<polyline points="825.6,101.5 907.7,78.9 975.7,64.3"/>
<polyline points="825.6,101.5 928.6,128.9"/>
<polyline points="825.6,101.5 757.9,129.1 700.7,165.5"/>
<polyline points="913.5,49.5 975.7,64.3"/>
<polyline points="975.7,64.3 972.4,49.5"/>
<polyline points="975.7,64.3 995,49.5"/>
<polyline points="975.7,64.3 1124,65.8"/>
<polyline points="975.7,64.3 928.6,128.9"/>
<polyline points="975.7,64.3 1048.7,128.9"/>
<polyline points="928.6,128.9 873.3,142.9 824.9,164.2"/>
<polyline points="666.3,152.9 700.7,165.5"/>
<polyline points="666.3,179.3 700.7,165.5"/>
<polyline points="700.7,165.5 762.9,162.5 824.9,164.2"/>
<polyline points="928.6,128.9 989,124.7 1048.7,128.9"/>
<polyline points="928.6,128.9 989,200.5"/>
<polyline points="1048.7,128.9 989,200.5"/>
<polyline points="1107.7,49.5 1124,65.8"/>
<polyline points="1126.5,49.5 1124,65.8"/>
<polyline points="1124,65.8 1171.7,49.5"/>
<polyline points="1252,49.5 1278.3,122.3"/>
<polyline points="1348.6,49.5 1429.4,68.9"/>
<polyline points="1124,65.8 1048.7,128.9"/>
<polyline points="1124,65.8 1278.3,122.3"/>
<polyline points="1124,65.8 1153.4,163.7"/>
<polyline points="1278.3,122.3 1429.4,68.9"/>
<polyline points="1278.3,122.3 1153.4,163.7"/>
<polyline points="1278.3,122.3 1481.3,173.8"/>
<polyline points="1278.3,122.3 1240.7,215.1"/>
<polyline points="1048.7,128.9 1104,142.4 1153.4,163.7"/>
<polyline points="1153.4,163.7 1152.3,239.4 1152.3,314.2"/>
<polyline points="1153.4,163.7 1240.7,215.1"/>
<polyline points="1348.3,49.5 1429.4,68.9"/>
<polyline points="1481.3,173.8 1240.7,215.1"/>
<polyline points="1481.3,173.8 1328.5,265.3"/>
<polyline points="1048.7,128.9 1152.3,239.4"/>
<polyline points="989,200.5 1077.6,210.3 1152.3,239.4"/>
<polyline points="1049,279.6 1152.3,239.4"/>
<polyline points="1152.3,239.4 1240.7,215.1"/>
<polyline points="1240.7,215.1 1328.5,265.3"/>
<polyline points="1240.7,215.1 1240.9,365.1"/>
<polyline points="1328.5,265.3 1478.8,259"/>
<polyline points="1328.5,265.3 1397.5,305.4"/>
<polyline points="1397.5,305.4 1478.8,259"/>
<polyline points="1328.5,265.3 1240.9,365.1"/>
<polyline points="1328.5,265.3 1328.8,415.8"/>
<polyline points="1328.5,265.3 1397.8,380.2"/>
<polyline points="1397.5,305.4 1397.8,380.2 1397.8,455.9"/>
<polyline points="1478.8,259 1397.8,380.2"/>
<polyline points="1328.8,415.8 1397.8,380.2 1478.8,335"/>
<polyline points="1478.8,335 1397.8,455.9"/>
<polyline points="1152.3,239.4 1240.9,365.1"/>
<polyline points="1484.6,236.4 1481.3,330.5"/>
<polyline points="1478.8,335 1485.6,331"/>
<polyline points="1485.1,361.3 1484.8,368.9 1481.3,400.2"/>
<polyline points="1411.8,49.5 1429.9,68.9 1463.8,119.8 1481.3,173.8 1484,190 1485.6,212.6 1482,240 1479.3,259 1480.1,410.3 1397.8,455.9 1328.8,415.8 1240.9,365.1 1210.6,348.1 1152.3,314.2 1105.2,293.4 1060,283.4 1049,279.6 989,276.2 929,279.6 907.7,286.6 873.3,294.1 824.9,314.7 801.8,334.3"/>
<polyline points="801.8,334.3 824.9,353 913.5,404.7 1000,454.9 1070.4,495.1 1070.4,606"/>
<polyline points="928.6,128.9 873.9,185 826.4,239.4"/>
<polyline points="989,200.5 900.3,210.3 826.4,239.4"/>
<polyline points="824.9,164.2 826.4,239.4 824.9,314.7"/>
<polyline points="826.4,239.4 929,279.6"/>
<polyline points="989,200.5 929,279.6"/>
<polyline points="989,200.5 1049,279.6"/>
<polyline points="700.7,165.5 672.7,213.4 666.3,245.1 666.3,264"/>
<polyline points="700.7,165.5 765.3,224.5"/>
<polyline points="666.3,264 713.9,241.9 765.3,224.5"/>
<polyline points="666.3,264 713.9,280 765.3,293.6"/>
<polyline points="666.3,264 672.7,299 683.8,341.8"/>
<polyline points="765.3,293.6 683.8,341.8"/>
<polyline points="765.3,293.6 786.8,322.8 801.8,334.3"/>
<polyline points="765.3,224.5 788.4,192.8 824.9,164.2"/>
<polyline points="824.9,164.2 799.5,216.6 778.3,278.4"/>
<polyline points="778.3,278.4 799.5,257.8 826.4,239.4"/>
<polyline points="778.3,278.4 824.9,314.7"/>
<polyline points="765.3,224.5 778.3,278.4"/>
<polyline points="765.3,224.5 757.6,259.4 761.5,276.8 765.3,293.6"/>
<polyline points="763,241.9 760.8,267.3"/>
<polyline points="778.3,278.4 774.1,304.4"/>
<polyline points="765.3,293.6 769.4,296.5 778.3,278.4"/>
<polyline points="683.8,341.8 824.9,353"/>
<polyline points="683.8,341.8 696.4,427.3"/>
<polyline points="696.4,427.3 824.9,353"/>
<polyline points="696.4,427.3 840.2,457.9"/>
<polyline points="824.9,353 840.2,457.9"/>
<polyline points="840.2,457.9 913.5,404.7"/>
<polyline points="840.2,457.9 1000,454.9"/>
<polyline points="696.4,427.3 710.2,524.9"/>
<polyline points="840.2,457.9 710.2,524.9"/>
<polyline points="840.2,457.9 873.8,545"/>
<polyline points="840.2,457.9 951.6,498.8"/>
<polyline points="1000,454.9 951.6,498.8"/>
<polyline points="666.3,350 683.8,341.8"/>
<polyline points="666,338 683.8,341.8"/>
<polyline points="666.3,419.8 696.4,427.3"/>
<polyline points="666.3,437.9 696.4,427.3"/>
<polyline points="951.6,498.8 1070.4,495.1"/>
<polyline points="951.6,498.8 873.8,545"/>
<polyline points="951.6,498.8 989.2,542"/>
<polyline points="989.2,542 1070.4,495.1"/>
<polyline points="666.3,513.7 710.2,524.9 785.5,537.7 873.8,545 931,544.5 989.2,542"/>
<polyline points="873.8,545 874.6,606"/>
<polyline points="873.8,545 969.9,606"/>
<polyline points="710.2,524.9 712.7,606.5"/>
<polyline points="989.2,542 989.2,606"/>
<polyline points="1070.4,495.1 996.4,606"/>
<polyline points="1070.4,571.4 1010.2,606"/>
<polyline points="1070.4,571.4 1046.6,606"/>
<polyline points="435,554.5 452.6,568.1 511.6,605.7"/>
<polyline points="446.3,554.5 452.6,568.1"/>
<polyline points="458.9,554.5 452.6,568.1"/>
<polyline points="507.8,554.5 544.2,605.7"/>
<polyline points="557.5,554.5 560.5,605.7"/>
<polyline points="710.2,524.9 596.9,605.5"/>
<polyline points="873.8,545 803.9,605.5"/>
<polyline points="395,56.3 400.6,49.6"/>
<polyline points="417.3,49.8 427.7,61.9"/>
<polyline points="440.9,49.8 427.7,61.9"/>
<polyline points="454.1,49.8 469.2,63.7"/>
<polyline points="489,49.8 478.6,63.7"/>
<polyline points="497.5,49.8 522,60.5 535.2,63.7"/>
<polyline points="529.5,49.8 535.2,63.7"/>
<polyline points="554,63.7 597.4,51.1"/>
<polyline points="597.4,49.8 597.4,63.7"/>
<polyline points="597.4,51.1 665.3,63.7"/>
<polyline points="395,60.4 427.7,62"/>
</g>
</svg>
<div class="b" style="left:394px;top:606px;width:1200px;height:3px;background:#fcfcfc;"></div>
<div class="b" style="left:394px;top:609px;width:1200px;height:4px;background:#f4f4f4;"></div>
<div class="b" style="left:182px;top:63px;width:484px;height:492px;background:#f0f0f0;border-left:1px solid #5c5c5c;border-bottom:1px solid #5c5c5c;border-top:1px solid rgba(40,40,40,.55);box-sizing:border-box;box-shadow:0 4px 13px rgba(0,0,0,.3);">
</div>
<div class="b" style="left:183px;top:64px;width:483px;height:25px;background:#fff;"></div>
<span class="t" id="t25" style="left:207.6px;top:69px;font-size:10.7px;transform:scaleX(0.9346);">Mesh computation succeed</span>
<svg class="b" style="left:560px;top:66px" width="100" height="20" viewBox="560 66 100 20"><g fill="none" stroke="#000" stroke-width="1"><path d="M566 76.4h9" stroke="#d8d8d8" stroke-width="1.2"/><rect x="604.5" y="71.5" width="8" height="8" stroke-width=".95"/><path d="M642.3 71.3l8.6 8.6M650.9 71.3l-8.6 8.6"/></g></svg>
<svg class="b" style="left:188px;top:70px" width="16" height="12" viewBox="188 70 16 12"><path d="M189.6 73.4 q3.2-.4 5.6 1.2 q2.4-1.9 7.4-1.7 q-3.4.9-5.6 2.6 l.2 2.9 l2 .6 h-5.4 l1.9-.7 l.1-2.8 q-2.4-2-6.2-2.100z" fill="#c89a3c"/></svg>
<div class="b" style="left:196px;top:107px;width:456px;height:42px;border:1px solid #dedede;box-sizing:border-box;"></div>
<div class="b" style="left:201px;top:106px;width:63.8px;height:3px;background:#f0f0f0;"></div>
<span class="t" id="t26" style="left:203px;top:101px;font-size:10px;transform:scaleX(0.8671);">Compute mesh</span>
<div class="b" style="left:196px;top:160px;width:456px;height:35px;border:1px solid #dedede;box-sizing:border-box;"></div>
<div class="b" style="left:201px;top:159px;width:27px;height:3px;background:#f0f0f0;"></div>
<span class="t" id="t27" style="left:203px;top:154px;font-size:10px;transform:scaleX(0.8244);">Name</span>
<div class="b" style="left:196px;top:206px;width:456px;height:311px;border:1px solid #dedede;box-sizing:border-box;"></div>
<div class="b" style="left:201px;top:205px;width:48.6px;height:3px;background:#f0f0f0;"></div>
<span class="t" id="t28" style="left:203px;top:200px;font-size:10px;transform:scaleX(0.8912);">Mesh Infos</span>
<svg class="b" style="left:204px;top:123px" width="34" height="16" viewBox="204 123 34 16"><circle cx="211.5" cy="130.8" r="4.9" fill="#fff" stroke="#7d7d7d" stroke-width="1.2"/><circle cx="211.5" cy="130.8" r="2.6" fill="#333"/><polygon points="233.17,129.88 234.69,130.18 234.69,132.42 233.17,132.72 232.90,133.39 233.76,134.67 232.17,136.26 230.89,135.40 230.22,135.67 229.92,137.19 227.68,137.19 227.38,135.67 226.71,135.40 225.43,136.26 223.84,134.67 224.70,133.39 224.43,132.72 222.91,132.42 222.91,130.18 224.43,129.88 224.70,129.21 223.84,127.93 225.43,126.34 226.71,127.20 227.38,126.93 227.68,125.41 229.92,125.41 230.22,126.93 230.89,127.20 232.17,126.34 233.76,127.93 232.90,129.21" fill="#16284a" stroke="#16284a" stroke-width="1" stroke-linejoin="round"/><circle cx="228.5" cy="131" r="3.7" fill="#6a9ad6"/><circle cx="228.8" cy="131.3" r="1.9" fill="#274a86"/><circle cx="228.8" cy="131.4" r="1" fill="#8a96a6"/></svg>
<span class="t" id="t29" style="left:205.7px;top:175px;font-size:10px;transform:scaleX(0.8713);">Mesh_1</span>
<span class="t" id="t30" style="left:295.2px;top:221px;font-size:10px;font-style:italic;transform:scaleX(0.9612);">Total</span>
<span class="t" id="t31" style="left:382.9px;top:221px;font-size:10px;font-style:italic;transform:scaleX(0.8989);">Linear</span>
<span class="t" id="t32" style="left:471.2px;top:221px;font-size:10px;font-style:italic;transform:scaleX(0.9110);">Quadratic</span>
<span class="t" id="t33" style="left:559.2px;top:221px;font-size:10px;font-style:italic;transform:scaleX(0.9176);">Bi-Quadratic</span>
<span class="t" id="t34" style="left:206.2px;top:237px;font-size:10px;font-weight:bold;transform:scaleX(0.9081);">Nodes :</span>
<span class="t" id="t35" style="left:294.9px;top:237px;font-size:10px;transform:scaleX(0.8881);">28058</span>
<span class="t" id="t36" style="left:206.2px;top:260px;font-size:10px;font-weight:bold;transform:scaleX(0.9555);">0D Elements :</span>
<span class="t" id="t37" style="left:293.9px;top:260px;font-size:10px;transform:scaleX(0.8989);">0</span>
<span class="t" id="t38" style="left:206.2px;top:284px;font-size:10px;font-weight:bold;transform:scaleX(0.9162);">Balls :</span>
<span class="t" id="t39" style="left:293.9px;top:284px;font-size:10px;transform:scaleX(0.8989);">0</span>
<span class="t" id="t40" style="left:206.2px;top:307px;font-size:10px;font-weight:bold;transform:scaleX(0.9135);">Edges :</span>
<span class="t" id="t41" style="left:294.9px;top:307px;font-size:10px;transform:scaleX(0.8899);">1236</span>
<span class="t" id="t42" style="left:381.6px;top:307px;font-size:10px;transform:scaleX(0.8989);">0</span>
<span class="t" id="t43" style="left:470.9px;top:307px;font-size:10px;transform:scaleX(0.8899);">1236</span>
<span class="t" id="t44" style="left:206.2px;top:330px;font-size:10px;font-weight:bold;transform:scaleX(0.9429);">Faces :</span>
<span class="t" id="t45" style="left:294.9px;top:330px;font-size:10px;transform:scaleX(0.8899);">7272</span>
<span class="t" id="t46" style="left:381.6px;top:330px;font-size:10px;transform:scaleX(0.8989);">0</span>
<span class="t" id="t47" style="left:470.9px;top:330px;font-size:10px;transform:scaleX(0.8899);">7272</span>
<span class="t" id="t48" style="left:557.9px;top:330px;font-size:10px;transform:scaleX(0.8989);">0</span>
<span class="t" id="t49" style="left:206.2px;top:346px;font-size:10px;transform:scaleX(0.8850);">Triangles :</span>
<span class="t" id="t50" style="left:294.9px;top:346px;font-size:10px;transform:scaleX(0.8899);">7272</span>
<span class="t" id="t51" style="left:381.6px;top:346px;font-size:10px;transform:scaleX(0.8989);">0</span>
<span class="t" id="t52" style="left:470.9px;top:346px;font-size:10px;transform:scaleX(0.8899);">7272</span>
<span class="t" id="t53" style="left:557.9px;top:346px;font-size:10px;transform:scaleX(0.8989);">0</span>
<span class="t" id="t54" style="left:206.2px;top:362px;font-size:10px;transform:scaleX(0.8913);">Quadrangles :</span>
<span class="t" id="t55" style="left:293.9px;top:362px;font-size:10px;transform:scaleX(0.8989);">0</span>
<span class="t" id="t56" style="left:381.6px;top:362px;font-size:10px;transform:scaleX(0.8989);">0</span>
<span class="t" id="t57" style="left:469.9px;top:362px;font-size:10px;transform:scaleX(0.8989);">0</span>
<span class="t" id="t58" style="left:557.9px;top:362px;font-size:10px;transform:scaleX(0.8989);">0</span>
<span class="t" id="t59" style="left:206.2px;top:378px;font-size:10px;transform:scaleX(0.8779);">Polygons :</span>
<span class="t" id="t60" style="left:293.9px;top:378px;font-size:10px;transform:scaleX(0.8989);">0</span>
<span class="t" id="t61" style="left:381.6px;top:378px;font-size:10px;transform:scaleX(0.8989);">0</span>
<span class="t" id="t62" style="left:469.9px;top:378px;font-size:10px;transform:scaleX(0.8989);">0</span>
<span class="t" id="t63" style="left:206.2px;top:401px;font-size:10px;font-weight:bold;transform:scaleX(0.9671);">Volumes :</span>
<span class="t" id="t64" style="left:294.9px;top:401px;font-size:10px;transform:scaleX(0.8881);">15428</span>
<span class="t" id="t65" style="left:381.6px;top:401px;font-size:10px;transform:scaleX(0.8989);">0</span>
<span class="t" id="t66" style="left:470.9px;top:401px;font-size:10px;transform:scaleX(0.8881);">15428</span>
<span class="t" id="t67" style="left:557.9px;top:401px;font-size:10px;transform:scaleX(0.8989);">0</span>
<span class="t" id="t68" style="left:206.2px;top:417px;font-size:10px;transform:scaleX(0.9306);">Tetrahedrons :</span>
<span class="t" id="t69" style="left:294.9px;top:417px;font-size:10px;transform:scaleX(0.8881);">15428</span>
<span class="t" id="t70" style="left:381.6px;top:417px;font-size:10px;transform:scaleX(0.8989);">0</span>
<span class="t" id="t71" style="left:470.9px;top:417px;font-size:10px;transform:scaleX(0.8881);">15428</span>
<span class="t" id="t72" style="left:206.2px;top:433px;font-size:10px;transform:scaleX(0.9070);">Hexahedrons :</span>
<span class="t" id="t73" style="left:293.9px;top:433px;font-size:10px;transform:scaleX(0.8989);">0</span>
<span class="t" id="t74" style="left:381.6px;top:433px;font-size:10px;transform:scaleX(0.8989);">0</span>
<span class="t" id="t75" style="left:469.9px;top:433px;font-size:10px;transform:scaleX(0.8989);">0</span>
<span class="t" id="t76" style="left:557.9px;top:433px;font-size:10px;transform:scaleX(0.8989);">0</span>
<span class="t" id="t77" style="left:206.2px;top:449px;font-size:10px;transform:scaleX(0.8786);">Pyramids :</span>
<span class="t" id="t78" style="left:293.9px;top:449px;font-size:10px;transform:scaleX(0.8989);">0</span>
<span class="t" id="t79" style="left:381.6px;top:449px;font-size:10px;transform:scaleX(0.8989);">0</span>
<span class="t" id="t80" style="left:469.9px;top:449px;font-size:10px;transform:scaleX(0.8989);">0</span>
<span class="t" id="t81" style="left:206.2px;top:464px;font-size:10px;transform:scaleX(0.8447);">Prisms :</span>
<span class="t" id="t82" style="left:293.9px;top:464px;font-size:10px;transform:scaleX(0.8989);">0</span>
<span class="t" id="t83" style="left:381.6px;top:464px;font-size:10px;transform:scaleX(0.8989);">0</span>
<span class="t" id="t84" style="left:469.9px;top:464px;font-size:10px;transform:scaleX(0.8989);">0</span>
<span class="t" id="t85" style="left:206.2px;top:480px;font-size:10px;transform:scaleX(0.8762);">Hexagonal prisms :</span>
<span class="t" id="t86" style="left:293.9px;top:480px;font-size:10px;transform:scaleX(0.8989);">0</span>
<span class="t" id="t87" style="left:206.2px;top:496px;font-size:10px;transform:scaleX(0.8993);">Polyhedrons :</span>
<span class="t" id="t88" style="left:293.9px;top:496px;font-size:10px;transform:scaleX(0.8989);">0</span>
<div class="b" style="left:206.2px;top:254px;width:83.2px;height:1px;background:#acacac;"></div>
<div class="b" style="left:206.2px;top:255px;width:83.2px;height:1px;background:#fbfbfb;"></div>
<div class="b" style="left:294.6px;top:254px;width:83.2px;height:1px;background:#acacac;"></div>
<div class="b" style="left:294.6px;top:255px;width:83.2px;height:1px;background:#fbfbfb;"></div>
<div class="b" style="left:382.3px;top:254px;width:83.2px;height:1px;background:#acacac;"></div>
<div class="b" style="left:382.3px;top:255px;width:83.2px;height:1px;background:#fbfbfb;"></div>
<div class="b" style="left:470.6px;top:254px;width:83.2px;height:1px;background:#acacac;"></div>
<div class="b" style="left:470.6px;top:255px;width:83.2px;height:1px;background:#fbfbfb;"></div>
<div class="b" style="left:558.6px;top:254px;width:83.8px;height:1px;background:#acacac;"></div>
<div class="b" style="left:558.6px;top:255px;width:83.8px;height:1px;background:#fbfbfb;"></div>
<div class="b" style="left:206.2px;top:277px;width:83.2px;height:1px;background:#acacac;"></div>
<div class="b" style="left:206.2px;top:278px;width:83.2px;height:1px;background:#fbfbfb;"></div>
<div class="b" style="left:294.6px;top:277px;width:83.2px;height:1px;background:#acacac;"></div>
<div class="b" style="left:294.6px;top:278px;width:83.2px;height:1px;background:#fbfbfb;"></div>
<div class="b" style="left:382.3px;top:277px;width:83.2px;height:1px;background:#acacac;"></div>
<div class="b" style="left:382.3px;top:278px;width:83.2px;height:1px;background:#fbfbfb;"></div>
<div class="b" style="left:470.6px;top:277px;width:83.2px;height:1px;background:#acacac;"></div>
<div class="b" style="left:470.6px;top:278px;width:83.2px;height:1px;background:#fbfbfb;"></div>
<div class="b" style="left:558.6px;top:277px;width:83.8px;height:1px;background:#acacac;"></div>
<div class="b" style="left:558.6px;top:278px;width:83.8px;height:1px;background:#fbfbfb;"></div>
<div class="b" style="left:206.2px;top:300px;width:83.2px;height:1px;background:#acacac;"></div>
<div class="b" style="left:206.2px;top:301px;width:83.2px;height:1px;background:#fbfbfb;"></div>
<div class="b" style="left:294.6px;top:300px;width:83.2px;height:1px;background:#acacac;"></div>
<div class="b" style="left:294.6px;top:301px;width:83.2px;height:1px;background:#fbfbfb;"></div>
<div class="b" style="left:382.3px;top:300px;width:83.2px;height:1px;background:#acacac;"></div>
<div class="b" style="left:382.3px;top:301px;width:83.2px;height:1px;background:#fbfbfb;"></div>
<div class="b" style="left:470.6px;top:300px;width:83.2px;height:1px;background:#acacac;"></div>
<div class="b" style="left:470.6px;top:301px;width:83.2px;height:1px;background:#fbfbfb;"></div>
<div class="b" style="left:558.6px;top:300px;width:83.8px;height:1px;background:#acacac;"></div>
<div class="b" style="left:558.6px;top:301px;width:83.8px;height:1px;background:#fbfbfb;"></div>
<div class="b" style="left:206.2px;top:324px;width:83.2px;height:1px;background:#acacac;"></div>
<div class="b" style="left:206.2px;top:325px;width:83.2px;height:1px;background:#fbfbfb;"></div>
<div class="b" style="left:294.6px;top:324px;width:83.2px;height:1px;background:#acacac;"></div>
<div class="b" style="left:294.6px;top:325px;width:83.2px;height:1px;background:#fbfbfb;"></div>
<div class="b" style="left:382.3px;top:324px;width:83.2px;height:1px;background:#acacac;"></div>
<div class="b" style="left:382.3px;top:325px;width:83.2px;height:1px;background:#fbfbfb;"></div>
<div class="b" style="left:470.6px;top:324px;width:83.2px;height:1px;background:#acacac;"></div>
<div class="b" style="left:470.6px;top:325px;width:83.2px;height:1px;background:#fbfbfb;"></div>
<div class="b" style="left:558.6px;top:324px;width:83.8px;height:1px;background:#acacac;"></div>
<div class="b" style="left:558.6px;top:325px;width:83.8px;height:1px;background:#fbfbfb;"></div>
<div class="b" style="left:206.2px;top:394px;width:83.2px;height:1px;background:#acacac;"></div>
<div class="b" style="left:206.2px;top:395px;width:83.2px;height:1px;background:#fbfbfb;"></div>
<div class="b" style="left:294.6px;top:394px;width:83.2px;height:1px;background:#acacac;"></div>
<div class="b" style="left:294.6px;top:395px;width:83.2px;height:1px;background:#fbfbfb;"></div>
<div class="b" style="left:382.3px;top:394px;width:83.2px;height:1px;background:#acacac;"></div>
<div class="b" style="left:382.3px;top:395px;width:83.2px;height:1px;background:#fbfbfb;"></div>
<div class="b" style="left:470.6px;top:394px;width:83.2px;height:1px;background:#acacac;"></div>
<div class="b" style="left:470.6px;top:395px;width:83.2px;height:1px;background:#fbfbfb;"></div>
<div class="b" style="left:558.6px;top:394px;width:83.8px;height:1px;background:#acacac;"></div>
<div class="b" style="left:558.6px;top:395px;width:83.8px;height:1px;background:#fbfbfb;"></div>
<div class="b" style="left:533px;top:532px;width:61px;height:17px;background:#e1e1e1;border:1px solid #adadad;box-sizing:border-box;"></div>
<span class="t" id="t89" style="left:562.9px;top:534px;font-size:10px;transform:translateX(-50%) scaleX(0.8327);transform-origin:50% 50%;">Close</span>
<div class="b" style="left:600px;top:532px;width:61px;height:17px;background:#e1e1e1;border:1px solid #adadad;box-sizing:border-box;"></div>
<span class="t" id="t90" style="left:629.9px;top:534px;font-size:10px;transform:translateX(-50%) scaleX(0.8553);transform-origin:50% 50%;">Help</span>
<svg class="b" style="left:441px;top:78px" width="16" height="22" viewBox="441 78 16 22"><path d="M443.6 80.300v13.600l3.200-3 2.100 5 1.900-.8-2.100-4.900h4.300z" fill="#fff" stroke="#222" stroke-width=".9" stroke-linejoin="round"/></svg>
</body></html>
